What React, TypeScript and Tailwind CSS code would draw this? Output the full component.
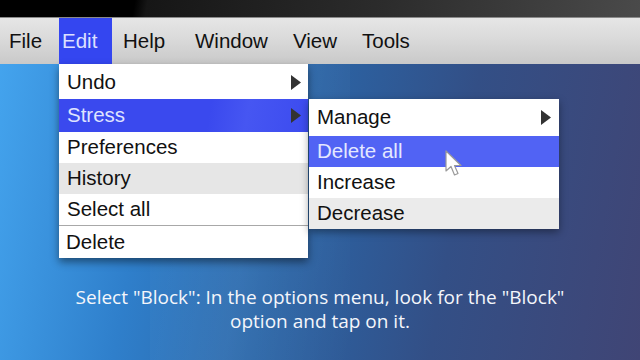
import React from "react";

function Arrow({ className = "" }: { className?: string }) {
  return (
    <svg width="10" height="15" viewBox="0 0 10 15" className={className}>
      <polygon points="0,0 10,7.5 0,15" fill="#333333" />
    </svg>
  );
}

function Cursor() {
  return (
    <svg width="20" height="28" viewBox="0 0 20 28" className="absolute left-[445px] top-[150px]">
      <path
        d="M1 1 L1 21 L6 16.5 L9.5 25 L13 23.5 L9.5 15.5 L16 15.5 Z"
        fill="#ffffff"
        stroke="#9a9a9a"
        strokeWidth="1.2"
        strokeLinejoin="round"
      />
    </svg>
  );
}

export default function App() {
  const font = { fontFamily: '"Liberation Sans", Arial, sans-serif' };
  return (
    <div
      className="relative w-[640px] h-[360px] overflow-hidden flex flex-col bg-[linear-gradient(100deg,#45a6f0_0%,#2f7fcb_25%,#2a66a8_45%,#334f86_70%,#404575_100%)]"
      style={font}
    >
      {/* top dark bar */}
      <div className="h-[17px] w-full bg-[linear-gradient(100deg,#000_0%,#000_21%,#161616_23%,#2c2c2c_60%,#4a4a4a_100%)]" />
      {/* menubar */}
      <div className="h-[47px] w-full flex items-stretch text-[20.5px] text-[#111] bg-[linear-gradient(180deg,#e6e6e6_0%,#dadada_45%,#c9c9c9_100%)] border-t border-[#8a8a8a]">
        <div className="w-[59px] pl-[9px] flex items-center">File</div>
        <div className="w-[53px] pl-[3px] flex items-center bg-[#3446f0] text-[#dde0ff]">Edit</div>
        <div className="w-[83px] pl-[11px] flex items-center">Help</div>
        <div className="w-[98px] flex items-center">Window</div>
        <div className="w-[69px] flex items-center">View</div>
        <div className="flex items-center">Tools</div>
      </div>

      {/* diagonal light streak */}
      <div className="absolute left-[150px] top-[64px] w-[200px] h-[296px] bg-[linear-gradient(100deg,transparent_0%,rgba(255,255,255,0.06)_50%,transparent_100%)]" />

      {/* Edit menu */}
      <div className="absolute left-[59px] top-[64px] w-[249px] flex flex-col bg-white text-[20.5px] text-[#111] shadow-[0_4px_8px_rgba(0,0,0,0.45)]">
        <div className="h-[35px] pl-[8px] pr-[7px] pt-[2px] flex items-center justify-between bg-white">
          <span>Undo</span>
          <Arrow />
        </div>
        <div className="h-[33px] pl-[8px] pr-[7px] flex items-center justify-between bg-[linear-gradient(100deg,#3a49ee_0%,#3a49ee_60%,#4656f2_75%,#3c4bef_100%)] text-[#dfe3ff]">
          <span>Stress</span>
          <Arrow />
        </div>
        <div className="h-[31px] pl-[8px] flex items-center bg-white">Preferences</div>
        <div className="h-[31px] pl-[8px] flex items-center bg-[#e6e6e6]">History</div>
        <div className="h-[32px] pl-[8px] flex items-center bg-white border-b border-[#a8a8a8]">Select all</div>
        <div className="h-[32px] pl-[7px] flex items-center bg-white">Delete</div>
      </div>

      {/* Submenu */}
      <div className="absolute left-[309px] top-[99px] w-[250px] flex flex-col bg-white text-[20.5px] text-[#111] shadow-[0_3px_8px_rgba(0,0,0,0.4)]">
        <div className="h-[37px] pl-[8px] pr-[8px] flex items-center justify-between">
          <span>Manage</span>
          <Arrow />
        </div>
        <div className="h-[31px] pl-[8px] flex items-center bg-[#5163f4] text-[#e4e8ff]">Delete all</div>
        <div className="h-[31px] pl-[8px] flex items-center bg-white">Increase</div>
        <div className="h-[31px] pl-[8px] flex items-center bg-[#ebebeb]">Decrease</div>
      </div>

      <Cursor />

      {/* caption */}
      <div
        className="mt-[221px] flex flex-col items-center text-[19px] leading-[24px] text-[#f4f6fb]"
        style={{ fontFamily: '"Open Sans", "Noto Sans", sans-serif' }}
      >
        <div>Select "Block": In the options menu, look for the "Block"</div>
        <div>option and tap on it.</div>
      </div>
    </div>
  );
}
